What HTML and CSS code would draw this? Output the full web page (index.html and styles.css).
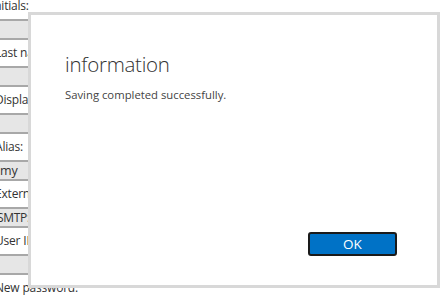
FILE: index.html
```html
<!DOCTYPE html>
<html>
<head>
<meta charset="utf-8">
<link rel="stylesheet" href="styles.css">
</head>
<body>
<div class="form">
  <div class="label label-second">Initials:</div>
  <div class="field"></div>
  <div class="label">Last name:</div>
  <div class="field"></div>
  <div class="label">Display name:</div>
  <div class="field"></div>
  <div class="label">Alias:</div>
  <div class="field">my</div>
  <div class="label">External email address:</div>
  <div class="field field-prefix">SMTP:</div>
  <div class="label">User ID:</div>
  <div class="field"></div>
  <div class="label">New password:</div>
</div>
<div class="dialog">
  <div class="title">information</div>
  <div class="message">Saving completed successfully.</div>
  <div class="footer">
    <button class="ok">OK</button>
  </div>
</div>
</body>
</html>
```
FILE: styles.css
```css
html, body {
  margin: 0;
  padding: 0;
}
body {
  width: 448px;
  height: 295px;
  overflow: hidden;
  position: relative;
  background: #ffffff;
  font-family: "Open Sans", "Noto Sans", sans-serif;
  color: #333333;
}
.form {
  margin: -7px 0 0 -40px;
  width: 200px;
}
.label {
  height: 26px;
  line-height: 26px;
  font-size: 12px;
  letter-spacing: -0.2px;
  padding-left: 35px;
  white-space: nowrap;
  color: #333333;
}
.label-second {
  padding-left: 31px;
}
.field {
  box-sizing: border-box;
  height: 21px;
  background: #e6e6e6;
  border-top: 2px solid #a8a8a8;
  border-bottom: 2px solid #a8a8a8;
  font-size: 12.5px;
  line-height: 17px;
  padding-left: 40px;
  color: #333333;
  white-space: nowrap;
}
.field-prefix {
  padding-left: 37px;
  font-size: 12px;
  letter-spacing: -0.3px;
}
.dialog {
  position: absolute;
  left: 28px;
  top: 12px;
  width: 406px;
  height: 270px;
  border: 3px solid #d8d8d8;
  background: #ffffff;
  display: flex;
  flex-direction: column;
}
.title {
  margin: 35px 0 0 34px;
  font-size: 20.5px;
  font-weight: 300;
  line-height: 28px;
  letter-spacing: -0.25px;
  color: #333333;
}
.message {
  margin: 9px 0 0 34px;
  font-size: 11.3px;
  line-height: 16px;
  color: #444444;
}
.footer {
  margin-top: auto;
  display: flex;
  justify-content: flex-end;
  padding: 0 40px 29px 0;
}
.ok {
  box-sizing: border-box;
  width: 89px;
  height: 24px;
  background: #0072c6;
  border: 2px solid #1a1a1a;
  border-radius: 3px;
  color: #ffffff;
  font-family: "Open Sans", "Noto Sans", sans-serif;
  font-size: 13.5px;
  line-height: 18px;
  padding: 0;
}
```
